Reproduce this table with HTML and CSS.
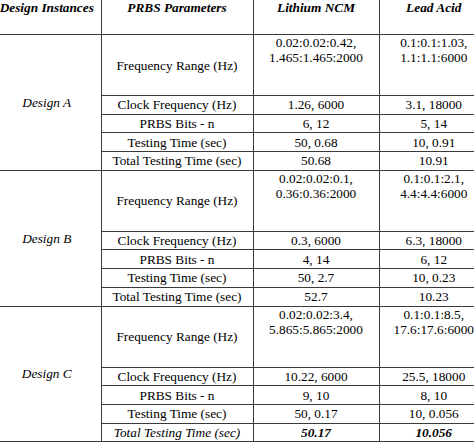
FILE: index.html
```html
<!DOCTYPE html>
<html>
<head>
<meta charset="utf-8">
<link rel="stylesheet" href="styles.css">
</head>
<body>
<table class="prbs">
  <colgroup>
    <col class="c1"><col class="c2"><col class="c3"><col class="c4">
  </colgroup>
  <thead>
    <tr class="head">
      <th>Design Instances</th>
      <th>PRBS Parameters</th>
      <th>Lithium NCM</th>
      <th>Lead Acid</th>
    </tr>
  </thead>
  <tbody>
    <tr class="freq">
      <td class="design" rowspan="5">Design A</td>
      <td class="param">Frequency Range (Hz)</td>
      <td class="range">0.02:0.02:0.42,<br>1.465:1.465:2000</td>
      <td class="range">0.1:0.1:1.03,<br>1.1:1.1:6000</td>
    </tr>
    <tr class="row"><td>Clock Frequency (Hz)</td><td>1.26, 6000</td><td>3.1, 18000</td></tr>
    <tr class="row"><td>PRBS Bits - n</td><td>6, 12</td><td>5, 14</td></tr>
    <tr class="row"><td>Testing Time (sec)</td><td>50, 0.68</td><td>10, 0.91</td></tr>
    <tr class="row"><td>Total Testing Time (sec)</td><td>50.68</td><td>10.91</td></tr>

    <tr class="freq">
      <td class="design" rowspan="5">Design B</td>
      <td class="param">Frequency Range (Hz)</td>
      <td class="range">0.02:0.02:0.1,<br>0.36:0.36:2000</td>
      <td class="range">0.1:0.1:2.1,<br>4.4:4.4:6000</td>
    </tr>
    <tr class="row"><td>Clock Frequency (Hz)</td><td>0.3, 6000</td><td>6.3, 18000</td></tr>
    <tr class="row"><td>PRBS Bits - n</td><td>4, 14</td><td>6, 12</td></tr>
    <tr class="row"><td>Testing Time (sec)</td><td>50, 2.7</td><td>10, 0.23</td></tr>
    <tr class="row"><td>Total Testing Time (sec)</td><td>52.7</td><td>10.23</td></tr>

    <tr class="freq">
      <td class="design" rowspan="5">Design C</td>
      <td class="param">Frequency Range (Hz)</td>
      <td class="range">0.02:0.02:3.4,<br>5.865:5.865:2000</td>
      <td class="range">0.1:0.1:8.5,<br>17.6:17.6:6000</td>
    </tr>
    <tr class="row"><td>Clock Frequency (Hz)</td><td>10.22, 6000</td><td>25.5, 18000</td></tr>
    <tr class="row"><td>PRBS Bits - n</td><td>9, 10</td><td>8, 10</td></tr>
    <tr class="row"><td>Testing Time (sec)</td><td>50, 0.17</td><td>10, 0.056</td></tr>
    <tr class="row final"><td>Total Testing Time (sec)</td><td class="bold">50.17</td><td class="bold">10.056</td></tr>
  </tbody>
</table>
</body>
</html>
```

FILE: styles.css
```css
html, body {
  margin: 0;
  padding: 0;
  background: #fff;
  overflow: hidden;
}

.prbs {
  border-collapse: collapse;
  table-layout: fixed;
  width: 495px;
  margin: 0 0 0 -7px;
  font-family: "Liberation Serif", "Times New Roman", serif;
  font-size: 13.3px;
  line-height: 15px;
  color: #000;
}

.c1 { width: 108px; }
.c2 { width: 152px; }
.c3 { width: 126px; }
.c4 { width: 109px; }

.prbs th,
.prbs td {
  border: 1px solid #3a3a3a;
  padding: 0;
  text-align: center;
  vertical-align: middle;
}

.prbs tr > :first-child { border-left: none; }
.prbs tr > :last-child { border-right: none; }
.prbs thead th { border-top: none; }

.head th {
  height: 34px;
  line-height: 15px;
  vertical-align: top;
  font-weight: bold;
  font-style: italic;
}

.freq td { height: 60px; }
.freq td.range { vertical-align: top; }

.row td { height: 17.7px; }

.design {
  font-style: italic;
  border-left: none;
}

.freq td.design { height: auto; }

.final td { font-style: italic; }
.final td.bold { font-weight: bold; }
```
